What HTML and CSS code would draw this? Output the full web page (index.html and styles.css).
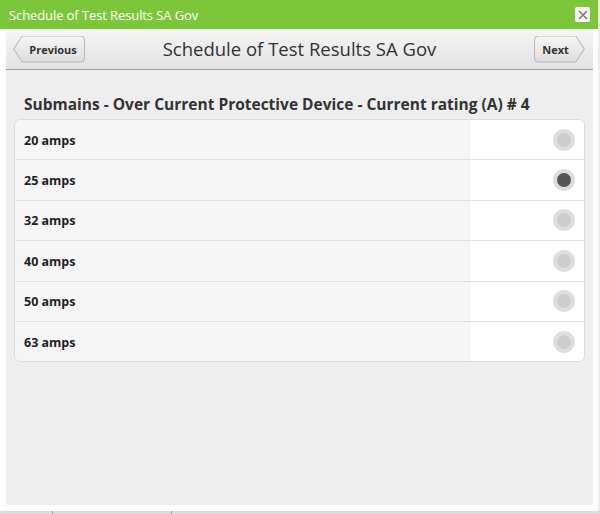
FILE: index.html
```html
<!DOCTYPE html>
<html>
<head>
<meta charset="utf-8">
<link rel="stylesheet" href="styles.css">
</head>
<body>
<div class="dialog">
  <div class="titlebar">
    <span class="title">Schedule of Test Results SA Gov</span>
    <span class="close">
      <svg width="10" height="10" viewBox="0 0 10 10"><path d="M1 1L9 9M9 1L1 9" stroke="#777" stroke-width="1.6" fill="none"/></svg>
    </span>
  </div>
  <div class="inner">
    <div class="header">
      <span class="btn prev"><span class="face">Previous</span></span>
      <h1 class="htitle">Schedule of Test Results SA Gov</h1>
      <span class="btn next"><span class="face">Next</span></span>
    </div>
    <div class="content">
      <div class="label">Submains - Over Current Protective Device - Current rating (A) # 4</div>
      <ul class="list">
        <li class="row"><span class="rtext">20 amps</span><span class="rcell"><span class="radio"></span></span></li>
        <li class="row"><span class="rtext">25 amps</span><span class="rcell"><span class="radio on"></span></span></li>
        <li class="row"><span class="rtext">32 amps</span><span class="rcell"><span class="radio"></span></span></li>
        <li class="row"><span class="rtext">40 amps</span><span class="rcell"><span class="radio"></span></span></li>
        <li class="row"><span class="rtext">50 amps</span><span class="rcell"><span class="radio"></span></span></li>
        <li class="row"><span class="rtext">63 amps</span><span class="rcell"><span class="radio"></span></span></li>
      </ul>
    </div>
  </div>
</div>
<div class="under"><span class="tick t1"></span><span class="tick t2"></span></div>
</body>
</html>
```
FILE: styles.css
```css
html, body { margin: 0; padding: 0; }
body {
  background: #ececec;
  font-family: "Open Sans", "DejaVu Sans", sans-serif;
  width: 600px;
  height: 514px;
  overflow: hidden;
}
.dialog {
  width: 598px;
  height: 511px;
  background: #fff;
  display: flex;
  flex-direction: column;
}
.titlebar {
  height: 29px;
  background: #7cc63a;
  display: flex;
  align-items: center;
  justify-content: space-between;
  padding: 0 8px 0 9px;
  box-sizing: border-box;
}
.title {
  color: #fff;
  font-size: 13px;
  letter-spacing: -0.1px;
}
.close {
  width: 15px;
  height: 15px;
  background: #fff;
  border-radius: 2px;
  display: flex;
  align-items: center;
  justify-content: center;
}
.inner {
  flex: 1;
  margin: 0 5px 6px 6px;
  background: #eeeeee;
  display: flex;
  flex-direction: column;
}
.header {
  height: 40px;
  border-bottom: 1px solid #9c9c9c;
  background: linear-gradient(#f5f5f5, #e3e3e3);
  display: flex;
  align-items: center;
  justify-content: space-between;
  padding: 0 8px 0 7px;
  position: relative;
}
.htitle {
  margin: 0;
  font-size: 18.5px;
  font-weight: normal;
  color: #333;
  position: absolute;
  left: 0; right: 0;
  top: 7px;
  line-height: 26px;
  text-align: center;
  pointer-events: none;
}
.btn {
  display: block;
  height: 27px;
  background: #b9b9b9;
  position: relative;
  z-index: 1;
}
.face {
  display: flex;
  align-items: center;
  justify-content: center;
  height: 27px;
  font-weight: bold;
  font-size: 11px;
  color: #333;
  background: linear-gradient(#f6f6f6, #dcdcdc);
}
.prev { width: 72px; clip-path: path("M9 0 H67 Q72 0 72 5 V22 Q72 27 67 27 H9 L0 13.5 Z"); }
.prev .face { padding-left: 8px; clip-path: path("M9.4 1 H67 Q71 1 71 5 V22 Q71 26 67 26 H9.4 L1.3 13.5 Z"); }
.next { width: 51px; clip-path: path("M5 0 H42 L51 13.5 L42 27 H5 Q0 27 0 22 V5 Q0 0 5 0 Z"); }
.next .face { padding-right: 8px; clip-path: path("M5 1 H41.6 L49.7 13.5 L41.6 26 H5 Q1 26 1 22 V5 Q1 1 5 1 Z"); }
.content {
  padding: 24px 8px 0 8px;
}
.label {
  font-weight: bold;
  font-size: 15.5px;
  color: #333;
  padding-left: 10px;
  margin-bottom: 5px;
  line-height: 20px;
  white-space: nowrap;
}
.list {
  list-style: none;
  margin: 0;
  padding: 0;
  border: 1px solid #dcdcdc;
  border-radius: 6px;
  overflow: hidden;
  background: #f6f6f6;
}
.row {
  display: flex;
  height: 39.4px;
  border-top: 1px solid #e0e0e0;
}
.row:first-child { border-top: none; }
.rtext {
  flex: 1;
  display: flex;
  align-items: center;
  padding-left: 9px;
  padding-top: 1px;
  font-weight: bold;
  font-size: 12.5px;
  color: #222;
}
.rcell {
  width: 114px;
  background: #fff;
  display: flex;
  align-items: center;
  justify-content: flex-end;
  padding-right: 9px;
  box-sizing: border-box;
}
.radio {
  width: 22px;
  height: 22px;
  border-radius: 50%;
  background: #dedede;
  display: flex;
  align-items: center;
  justify-content: center;
}
.radio::after {
  content: "";
  width: 14px;
  height: 14px;
  border-radius: 50%;
  background: #cdcdcd;
}
.radio.on::after { background: #555; }
.under {
  height: 3px;
  background: #dcdcdc;
  position: relative;
}
.tick { position: absolute; top: 0; width: 1px; height: 3px; background: #999; }
.t1 { left: 52px; }
.t2 { left: 171px; }
```
